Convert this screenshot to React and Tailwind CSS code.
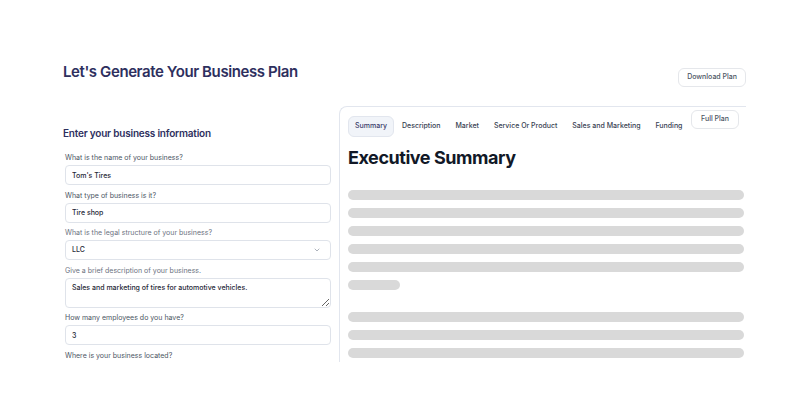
import React from 'react';

const fields = [
  { label: 'What is the name of your business?', value: "Tom's Tires", kind: 'input' },
  { label: 'What type of business is it?', value: 'Tire shop', kind: 'input' },
  { label: 'What is the legal structure of your business?', value: 'LLC', kind: 'select', light: true },
  { label: 'Give a brief description of your business.', value: 'Sales and marketing of tires for automotive vehicles.', kind: 'textarea', light: true },
  { label: 'How many employees do you have?', value: '3', kind: 'input' },
  { label: 'Where is your business located?', value: '', kind: 'input' },
];

const tabs = ['Summary', 'Description', 'Market', 'Service Or Product', 'Sales and Marketing', 'Funding'];

function Field({ field }) {
  const box = 'w-full rounded-[4px] border border-[#dfe3ea] bg-white px-[6px] text-[7px] font-medium text-[#1f2937] outline-none';
  return (
    <div className="flex flex-col">
      <label className={`mb-[2px] whitespace-nowrap text-[7px] leading-[11px] ${field.light ? 'text-[#6b7280]' : 'text-[#4b5563]'}`}>
        {field.label}
      </label>
      {field.kind === 'input' && (
        <input className={`${box} h-[20px]`} defaultValue={field.value} />
      )}
      {field.kind === 'select' && (
        <div className={`${box} flex h-[20px] items-center justify-between`}>
          <span>{field.value}</span>
          <svg width="8" height="8" viewBox="0 0 24 24" fill="none" stroke="#9ca3af" strokeWidth="2.5" strokeLinecap="round" strokeLinejoin="round" className="mr-[3px]">
            <path d="m6 9 6 6 6-6" />
          </svg>
        </div>
      )}
      {field.kind === 'textarea' && (
        <textarea className={`${box} h-[30px] resize py-[4px] leading-[10px]`} defaultValue={field.value} />
      )}
    </div>
  );
}

function Bars({ count, className = '' }) {
  return (
    <div className={`flex flex-col gap-[8px] ${className}`}>
      {Array.from({ length: count }).map((_, i) => (
        <div key={i} className="h-[10px] w-full rounded-full bg-[#d9d9d9]" />
      ))}
    </div>
  );
}

export default function App() {
  return (
    <div className="h-[419px] w-[800px] bg-white font-['Inter',sans-serif]">
      <div className="ml-[63px] h-[362px] w-[683px] overflow-hidden">
        <div className="flex h-[106px] items-start justify-between pt-[62px]">
          <h1 className="text-[15px] font-semibold leading-[20px] tracking-[-0.4px] text-[#2e2f5e]">Let's Generate Your Business Plan</h1>
          <button className="mt-[6px] h-[19px] whitespace-nowrap rounded-[6px] border border-[#e5e7eb] bg-white px-[8px] text-[7px] font-medium text-[#4b5563]">
            Download Plan
          </button>
        </div>

        <div className="flex gap-[8px]">
          <div className="w-[268px] shrink-0 pt-[20px]">
            <h2 className="text-[10px] font-semibold leading-[14px] tracking-[-0.2px] text-[#2e2f5e]">Enter your business information</h2>
            <div className="mt-[12px] flex flex-col gap-[4.5px] pl-[2px]">
              {fields.map((f) => (
                <Field key={f.label} field={f} />
              ))}
            </div>
          </div>

          <div className="h-[300px] w-[413px] shrink-0 rounded-tl-[8px] border-l border-t border-[#e2e6ee] pl-[8px] pr-[8px] pt-[3px]">
            <div className="flex items-start justify-between">
              <div className="mt-[6px] flex gap-[1px]">
                {tabs.map((t, i) => (
                  <div
                    key={t}
                    className={`flex h-[21px] items-center whitespace-nowrap rounded-[6px] text-[7px] font-medium ${
                      i === 0 ? 'border border-[#e2e6ee] bg-[#f1f4f9] px-[6px] text-[#3b3d6b]' : 'px-[7px] text-[#374151]'
                    }`}
                  >
                    {t}
                  </div>
                ))}
              </div>
              <button className="mr-[5px] h-[19px] whitespace-nowrap rounded-[6px] border border-[#e5e7eb] bg-white px-[9px] text-[7px] font-medium text-[#4b5563]">
                Full Plan
              </button>
            </div>
            <h2 className="mt-[10px] text-[18px] font-bold leading-[22px] tracking-[-0.45px] text-[#111827]">Executive Summary</h2>
            <div className="mt-[21px]">
              <Bars count={5} />
              <div className="mt-[8px] h-[10px] w-[52px] rounded-full bg-[#d9d9d9]" />
              <Bars count={3} className="mt-[22px]" />
            </div>
          </div>
        </div>
      </div>
    </div>
  );
}
